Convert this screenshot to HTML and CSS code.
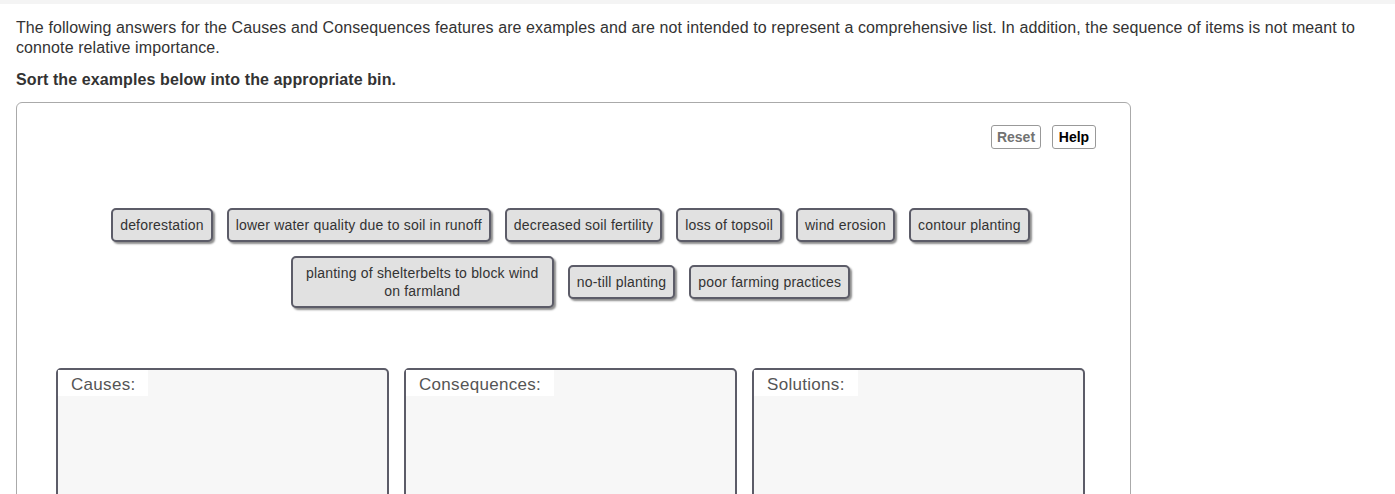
FILE: index.html
```html
<!DOCTYPE html>
<html>
<head>
<meta charset="utf-8">
<link rel="stylesheet" href="styles.css">
</head>
<body>
<div class="topbar"></div>
<main class="content">
  <p class="intro">The following answers for the Causes and Consequences features are examples and are not intended to represent a comprehensive list. In addition, the sequence of items is not meant to connote relative importance.</p>
  <p class="instruction">Sort the examples below into the appropriate bin.</p>
  <section class="panel">
    <div class="toolbar">
      <button class="tool-btn reset">Reset</button>
      <button class="tool-btn help">Help</button>
    </div>
    <div class="chips">
      <div class="chip">deforestation</div>
      <div class="chip">lower water quality due to soil in runoff</div>
      <div class="chip">decreased soil fertility</div>
      <div class="chip">loss of topsoil</div>
      <div class="chip">wind erosion</div>
      <div class="chip">contour planting</div>
      <div class="chip wide">planting of shelterbelts to block wind on farmland</div>
      <div class="chip">no-till planting</div>
      <div class="chip">poor farming practices</div>
    </div>
    <div class="bins">
      <div class="bin"><div class="bin-label">Causes:</div></div>
      <div class="bin"><div class="bin-label">Consequences:</div></div>
      <div class="bin"><div class="bin-label">Solutions:</div></div>
    </div>
  </section>
</main>
</body>
</html>
```

FILE: styles.css
```css
html, body {
  margin: 0;
  padding: 0;
  background: #fff;
}
body {
  font-family: "Liberation Sans", Arial, sans-serif;
  color: #333;
}
.topbar {
  height: 4px;
  background: #f4f4f4;
}
.content {
  padding: 14px 16px 0 16px;
}
.intro {
  margin: 0;
  font-size: 16px;
  line-height: 20px;
  letter-spacing: 0.1px;
  padding-right: 20px;
}
.instruction {
  margin: 12px 0 0 0;
  font-size: 16px;
  line-height: 20px;
  font-weight: bold;
  letter-spacing: 0.1px;
}
.panel {
  margin-top: 12px;
  width: 1115px;
  box-sizing: border-box;
  border: 1px solid #aaa;
  border-radius: 6px;
  padding: 22px 34px 0 39px;
  height: 420px;
}
.toolbar {
  display: flex;
  justify-content: flex-end;
  gap: 11px;
}
.tool-btn {
  font-family: "Liberation Sans", Arial, sans-serif;
  font-size: 14px;
  font-weight: bold;
  height: 24px;
  padding: 0 4px;
  background: #fff;
  border: 1px solid #999;
  border-radius: 3px;
  line-height: 22px;
}
.reset { color: #727272; width: 50px; }
.help { color: #000; width: 44px; }
.chips {
  width: 1029px;
  margin-top: 59px;
  display: flex;
  flex-wrap: wrap;
  justify-content: center;
  align-items: center;
  column-gap: 14px;
  row-gap: 14px;
  padding: 0 50px;
  box-sizing: border-box;
}
.chip {
  font-size: 14px;
  line-height: 18px;
  letter-spacing: 0.2px;
  padding: 6px 7px;
  background: #e1e1e1;
  border: 2px solid #5c5c68;
  border-radius: 5px;
  box-shadow: 2px 2px 2px rgba(0, 0, 0, 0.45);
  text-align: center;
  color: #333;
}
.chip.wide {
  width: 245px;
}
.bins {
  margin-top: 60px;
  width: 1029px;
  display: grid;
  grid-template-columns: repeat(3, 1fr);
  gap: 15px;
}
.bin {
  height: 200px;
  background: #f7f7f7;
  border: 2px solid #5c5c68;
  border-radius: 5px;
}
.bin-label {
  display: inline-block;
  background: #fff;
  font-size: 17px;
  letter-spacing: 0.3px;
  line-height: 23px;
  color: #555;
  padding: 3px 13px 0 13px;
}
.bin:first-child .bin-label {
  min-width: 64px;
}
```
